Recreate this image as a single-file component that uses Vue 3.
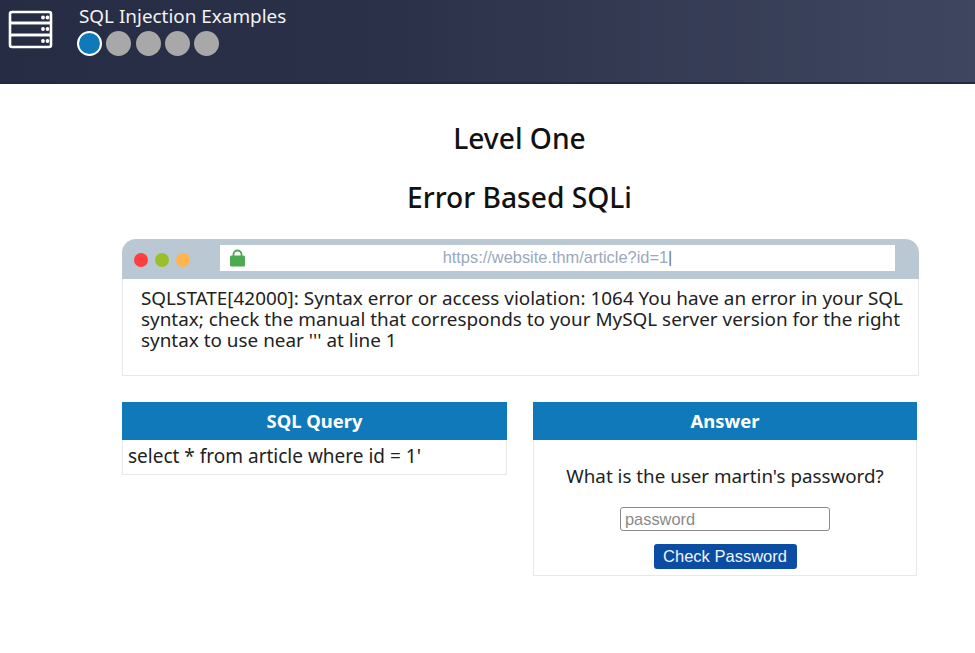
<script setup>
const dots = [1, 2, 3, 4, 5]
</script>

<template>
  <div class="page">
    <header class="bar">
      <svg class="logo" width="46" height="40" viewBox="0 0 46 40" fill="none" stroke="#fff" stroke-width="2.6">
        <rect x="2" y="2" width="41" height="11" rx="2" />
        <rect x="2" y="13" width="41" height="12" />
        <rect x="2" y="25" width="41" height="12" rx="2" />
        <g fill="#fff" stroke="none">
          <circle cx="35" cy="7.5" r="1.9" /><circle cx="39.5" cy="7.5" r="1.9" />
          <circle cx="35" cy="19" r="1.9" /><circle cx="39.5" cy="19" r="1.9" />
          <circle cx="35" cy="31" r="1.9" /><circle cx="39.5" cy="31" r="1.9" />
        </g>
      </svg>
      <div class="bar-text">
        <div class="bar-title">SQL Injection Examples</div>
        <div class="dots">
          <span v-for="d in dots" :key="d" class="dot" :class="{ active: d === 1 }"></span>
        </div>
      </div>
    </header>

    <main class="main">
      <h1 class="title first">Level One</h1>
      <h1 class="title second">Error Based SQLi</h1>

      <section class="browser">
        <div class="chrome">
          <span class="light red"></span>
          <span class="light green"></span>
          <span class="light orange"></span>
          <div class="url">
            <svg class="lock" width="17" height="18" viewBox="0 0 17 18">
              <path d="M4.5 8V5.5a4 4 0 0 1 8 0V8" fill="none" stroke="#4caa50" stroke-width="1.8" />
              <rect x="1" y="6.5" width="15" height="11" rx="1.5" fill="#4caa50" />
            </svg>
            <span class="url-text">https://website.thm/article?id=1<span class="caret">|</span></span>
          </div>
        </div>
        <div class="browser-body">
          SQLSTATE[42000]: Syntax error or access violation: 1064 You have an error in your SQL syntax; check the manual that corresponds to your MySQL server version for the right syntax to use near ''' at line 1
        </div>
      </section>

      <div class="columns">
        <section class="panel query">
          <h2 class="panel-head">SQL Query</h2>
          <div class="query-body">select * from article where id = 1'</div>
        </section>
        <section class="panel answer">
          <h2 class="panel-head">Answer</h2>
          <div class="answer-body">
            <p class="question">What is the user martin's password?</p>
            <input class="pw" type="text" placeholder="password" />
            <button class="check" type="button">Check Password</button>
          </div>
        </section>
      </div>
    </main>
  </div>
</template>

<style scoped>
.page {
  width: 975px;
  height: 653px;
  overflow: hidden;
  background: #fff;
  font-family: "Noto Sans", "Open Sans", sans-serif;
  color: #212529;
}
.bar {
  height: 84px;
  box-sizing: border-box;
  border-bottom: 2px solid #1f2a48;
  background: linear-gradient(90deg, #262c43 0%, #2b3149 40%, #3f4760 100%);
  display: flex;
  align-items: flex-start;
  padding: 9px 0 0 8px;
  gap: 24px;
}
.logo { margin-top: 1px; }
.bar-text { margin-top: -4px; margin-left: 1px; }
.bar-title {
  color: #f2f3f5;
  font-size: 18.9px;
  line-height: 22px;
}
.dots { display: flex; gap: 4.3px; margin-top: 4px; margin-left: -2px; }
.dot {
  width: 25px;
  height: 25px;
  border-radius: 50%;
  background: #a8a8a8;
}
.dot.active {
  box-sizing: border-box;
  background: #0f79ba;
  border: 2px solid #fff;
}
.main { padding: 0 56px 0 122px; }
.title {
  margin: 0;
  width: 795px;
  text-align: center;
  font-size: 28.2px;
  line-height: 40px;
  font-weight: 500;
  color: #111;
}
.first { padding-top: 34px; }
.second { margin-top: 19px; }
.browser { margin-top: 22px; width: 797px; }
.chrome {
  height: 40px;
  background: #bac8d3;
  border-radius: 14px 14px 0 0;
  display: flex;
  align-items: center;
  padding: 0 24px 0 12px;
  gap: 7px;
}
.light { width: 14px; height: 14px; border-radius: 50%; margin-top: 1px; }
.red { background: #ff3f3f; }
.green { background: #9bbf2b; }
.orange { background: #ffb54d; }
.url {
  margin-left: 23px;
  flex: 1;
  height: 26px;
  margin-top: -3px;
  background: #fff;
  display: flex;
  align-items: center;
  position: relative;
}
.lock { margin-left: 9px; }
.url-text {
  position: absolute;
  left: 0;
  right: 0;
  text-align: center;
  font-family: "Liberation Sans", Arial, sans-serif;
  font-size: 16.4px;
  color: #9aa9bc;
}
.caret { color: #777; font-weight: 300; }
.browser-body {
  box-sizing: border-box;
  height: 97px;
  border: 1px solid #e6e8ea;
  border-top: 0;
  padding: 9px 10px 0 18px;
  font-size: 18.9px;
  line-height: 21px;
  color: #222;
}
.columns {
  display: flex;
  align-items: flex-start;
  gap: 26px;
  margin-top: 26px;
}
.panel { border: 1px solid #e6e8ea; border-top: 0; box-sizing: border-box; }
.query { width: 385px; }
.answer { width: 384px; }
.panel-head {
  margin: 0 -1px;
  height: 38px;
  background: #0f79ba;
  color: #fff;
  font-size: 18.4px;
  line-height: 37px;
  font-weight: 700;
  text-align: center;
}
.query-body {
  height: 34px;
  box-sizing: border-box;
  padding: 3px 0 0 5px;
  font-size: 19px;
  line-height: 26px;
  color: #222;
}
.answer-body {
  height: 135px;
  box-sizing: border-box;
  display: flex;
  flex-direction: column;
  align-items: center;
  padding-top: 23px;
}
.question {
  margin: 0;
  font-size: 18.8px;
  line-height: 26px;
  color: #222;
}
.pw {
  box-sizing: border-box;
  width: 210px;
  height: 24px;
  margin-top: 18px;
  padding: 0 0 0 4px;
  border: 1px solid #8a8a8a;
  border-radius: 3px;
  font-family: "Liberation Sans", Arial, sans-serif;
  font-size: 16.4px;
  outline: none;
}
.pw::placeholder { color: #8a8a8a; opacity: 1; }
.check {
  width: 143px;
  height: 25px;
  margin-top: 13px;
  padding: 0;
  border: 0;
  border-radius: 3px;
  background: #0a4da2;
  color: #f2f5fa;
  font-family: "Liberation Sans", Arial, sans-serif;
  font-size: 16.5px;
}
</style>
